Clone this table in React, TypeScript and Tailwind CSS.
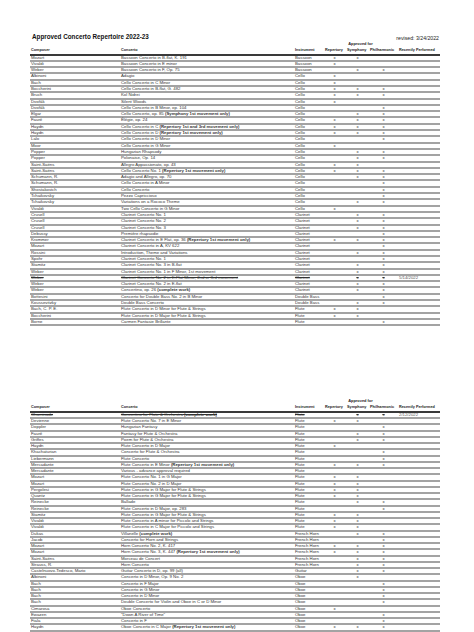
import React from "react";

type Entry = {
  c: string;
  w: string;
  b?: string;
  i: string;
  m: string;
  d?: string;
  x?: boolean;
};

const cols = "grid grid-cols-[90px_173px_30px_23px_23px_29px_42px]";

const page1: Entry[] = [
  { c: "Mozart", w: "Bassoon Concerto in B-flat, K. 191", i: "Bassoon", m: "RS" },
  { c: "Vivaldi", w: "Bassoon Concerto in E minor", i: "Bassoon", m: "R" },
  { c: "Weber", w: "Bassoon Concerto in F, Op. 75", i: "Bassoon", m: "SP" },
  { c: "Albinoni", w: "Adagio", i: "Cello", m: "R" },
  { c: "Bach", w: "Cello Concerto in C Minor", i: "Cello", m: "R" },
  { c: "Boccherini", w: "Cello Concerto in B-flat, G. 482", i: "Cello", m: "RSP" },
  { c: "Bruch", w: "Kol Nidrei", i: "Cello", m: "RSP" },
  { c: "Dvořák", w: "Silent Woods", i: "Cello", m: "R" },
  { c: "Dvořák", w: "Cello Concerto in B Minor, op. 104", i: "Cello", m: "P" },
  { c: "Elgar", w: "Cello Concerto, op. 85", b: "(Symphony 1st movement only)", i: "Cello", m: "SP" },
  { c: "Fauré", w: "Élégie, op. 24", i: "Cello", m: "RSP" },
  { c: "Haydn", w: "Cello Concerto in C", b: "(Repertory 1st and 3rd movement only)", i: "Cello", m: "RSP" },
  { c: "Haydn", w: "Cello Concerto in D", b: "(Repertory 1st movement only)", i: "Cello", m: "RSP" },
  { c: "Lalo", w: "Cello Concerto in D Minor", i: "Cello", m: "P" },
  { c: "Moor", w: "Cello Concerto in G Minor", i: "Cello", m: "R" },
  { c: "Popper", w: "Hungarian Rhapsody", i: "Cello", m: "SP" },
  { c: "Popper", w: "Polonaise, Op. 14", i: "Cello", m: "SP" },
  { c: "Saint-Saëns", w: "Allegro Appassionato, op. 43", i: "Cello", m: "RS" },
  { c: "Saint-Saëns", w: "Cello Concerto No. 1", b: "(Repertory 1st movement only)", i: "Cello", m: "RSP" },
  { c: "Schumann, R.", w: "Adagio and Allegro, op. 70", i: "Cello", m: "SP" },
  { c: "Schumann, R.", w: "Cello Concerto in A Minor", i: "Cello", m: "P" },
  { c: "Shostakovich", w: "Cello Concerto", i: "Cello", m: "P" },
  { c: "Tchaikovsky", w: "Pezzo Capriccioso", i: "Cello", m: "P" },
  { c: "Tchaikovsky", w: "Variations on a Rococo Theme", i: "Cello", m: "SP" },
  { c: "Vivaldi", w: "Two Cello Concerto in G Minor", i: "Cello", m: "R" },
  { c: "Crusell", w: "Clarinet Concerto No. 1", i: "Clarinet", m: "SP" },
  { c: "Crusell", w: "Clarinet Concerto No. 2", i: "Clarinet", m: "SP" },
  { c: "Crusell", w: "Clarinet Concerto No. 3", i: "Clarinet", m: "SP" },
  { c: "Debussy", w: "Première rhapsodie", i: "Clarinet", m: "P" },
  { c: "Krommer", w: "Clarinet Concerto in E Flat, op. 36", b: "(Repertory 1st movement only)", i: "Clarinet", m: "RSP" },
  { c: "Mozart", w: "Clarinet Concerto in A, KV 622", i: "Clarinet", m: "P" },
  { c: "Rossini", w: "Introduction, Theme and Variations", i: "Clarinet", m: "SP" },
  { c: "Spohr", w: "Clarinet Concerto No. 1", i: "Clarinet", m: "P" },
  { c: "Stamitz", w: "Clarinet Concerto No. 3 in B-flat", i: "Clarinet", m: "SP" },
  { c: "Weber", w: "Clarinet Concerto No. 1 in F Minor, 1st movement", i: "Clarinet", m: "SP" },
  { c: "Weber", w: "Clarinet Concerto No. 2 in E-Flat Minor, 2nd or 3rd movement", i: "Clarinet", m: "SP", d: "5/14/2022", x: true },
  { c: "Weber", w: "Clarinet Concerto No. 2 in E-flat", i: "Clarinet", m: "SP" },
  { c: "Weber", w: "Concertino, op. 26", b: "(complete work)", i: "Clarinet", m: "SP" },
  { c: "Bottesini", w: "Concerto for Double Bass No. 2 in B Minor", i: "Double Bass", m: "P" },
  { c: "Koussevitzky", w: "Double Bass Concerto", i: "Double Bass", m: "SP" },
  { c: "Bach, C. P. E.", w: "Flute Concerto in D Minor for Flute & Strings", i: "Flute", m: "RS" },
  { c: "Boccherini", w: "Flute Concerto in D Major for Flute & Strings", i: "Flute", m: "RS" },
  { c: "Borne", w: "Carmen Fantasie Brillante", i: "Flute", m: "P" },
];

const page2: Entry[] = [
  { c: "Chaminade", w: "Concertino for Flute & Orchestra", b: "(complete work)", i: "Flute", m: "SP", d: "2/12/2022", x: true },
  { c: "Devienne", w: "Flute Concerto No. 7 in E Minor", i: "Flute", m: "RS" },
  { c: "Doppler", w: "Hungarian Fantasy", i: "Flute", m: "P" },
  { c: "Fauré", w: "Fantasy for Flute & Orchestra", i: "Flute", m: "SP" },
  { c: "Griffes", w: "Poem for Flute & Orchestra", i: "Flute", m: "SP" },
  { c: "Haydn", w: "Flute Concerto in D Major", i: "Flute", m: "R" },
  { c: "Khachaturian", w: "Concerto for Flute & Orchestra", i: "Flute", m: "P" },
  { c: "Liebermann", w: "Flute Concerto", i: "Flute", m: "P" },
  { c: "Mercadante", w: "Flute Concerto in E Minor", b: "(Repertory 1st movement only)", i: "Flute", m: "RSP" },
  { c: "Mercadante", w: "Various - advance approval required", i: "Flute", m: "" },
  { c: "Mozart", w: "Flute Concerto No. 1 in G Major", i: "Flute", m: "RS" },
  { c: "Mozart", w: "Flute Concerto No. 2 in D Major", i: "Flute", m: "RS" },
  { c: "Pergolesi", w: "Flute Concerto in G Major for Flute & Strings", i: "Flute", m: "RS" },
  { c: "Quantz", w: "Flute Concerto in G Major for Flute & Strings", i: "Flute", m: "RS" },
  { c: "Reinecke", w: "Ballade", i: "Flute", m: "SP" },
  { c: "Reinecke", w: "Flute Concerto in D Major, op. 283", i: "Flute", m: "P" },
  { c: "Stamitz", w: "Flute Concerto in G Major for Flute & Strings", i: "Flute", m: "RS" },
  { c: "Vivaldi", w: "Flute Concerto in A minor for Piccolo and Strings", i: "Flute", m: "RS" },
  { c: "Vivaldi", w: "Flute Concerto in C Major for Piccolo and Strings", i: "Flute", m: "RS" },
  { c: "Dukas", w: "Villanelle", b: "(complete work)", i: "French Horn", m: "SP" },
  { c: "Jacob", w: "Concerto for Horn and Strings", i: "French Horn", m: "P" },
  { c: "Mozart", w: "Horn Concerto No. 2, K. 417", i: "French Horn", m: "RSP" },
  { c: "Mozart", w: "Horn Concerto No. 3, K. 447", b: "(Repertory 1st movement only)", i: "French Horn", m: "RSP" },
  { c: "Saint-Saëns", w: "Morceau de Concert", i: "French Horn", m: "SP" },
  { c: "Strauss, R.", w: "Horn Concerto", i: "French Horn", m: "SP" },
  { c: "Castelnuovo-Tedesco, Mario", w: "Guitar Concerto in D, op. 99 (all)", i: "Guitar", m: "SP" },
  { c: "Albinoni", w: "Concerto in D Minor, Op. 9 No. 2", i: "Oboe", m: "S" },
  { c: "Bach", w: "Concerto in F Major", i: "Oboe", m: "P" },
  { c: "Bach", w: "Concerto in G Minor", i: "Oboe", m: "P" },
  { c: "Bach", w: "Concerto in D Minor", i: "Oboe", m: "P" },
  { c: "Bach", w: "Double Concerto for Violin and Oboe in C or D Minor", i: "Oboe", m: "P" },
  { c: "Cimarosa", w: "Oboe Concerto", i: "Oboe", m: "R" },
  { c: "Ewazen", w: "\"Down A River of Time\"", i: "Oboe", m: "P" },
  { c: "Fiala", w: "Concerto in F", i: "Oboe", m: "P" },
  { c: "Haydn", w: "Oboe Concerto in C Major", b: "(Repertory 1st movement only)", i: "Oboe", m: "RSP" },
];

function Header() {
  return (
    <>
      <div className={cols}>
        <div className="col-start-4 col-span-3 text-center text-[3.9px] leading-[5px] font-bold text-[#222]">
          Approved for
        </div>
      </div>
      <div className={`${cols} h-[9.5px] items-end pb-[1px] border-b-2 border-[#3a3a3a] text-[3.8px] leading-[5px] font-bold text-[#222]`}>
        <div className="pl-[1px]">Composer</div>
        <div className="pl-[1px]">Concerto</div>
        <div className="pl-[2px] whitespace-nowrap">Instrument</div>
        <div className="pl-[2px]">Repertory</div>
        <div className="pl-[1px]">Symphony</div>
        <div className="pl-[1px]">Philharmonic</div>
        <div className="pl-[1px] whitespace-nowrap">Recently Performed</div>
      </div>
    </>
  );
}

function Row({ e, second }: { e: Entry; second?: boolean }) {
  const mark = (k: string) => (e.m.includes(k) ? "x" : "");
  return (
    <div
      className={`${cols} ${second ? "h-[6.25px]" : "h-[6.3px]"} border-b-2 border-[#a3a3a3] text-[4.3px] leading-[4.4px] text-[#333] ${
        e.x ? "line-through" : ""
      }`}
    >
      <div className="pl-[1px] whitespace-nowrap overflow-hidden">{e.c}</div>
      <div className="pl-[1px] whitespace-nowrap">
        {e.w}
        {e.b && <span className="font-bold"> {e.b}</span>}
      </div>
      <div className="pl-[2px] whitespace-nowrap">{e.i}</div>
      <div className="text-center">{mark("R")}</div>
      <div className="text-center">{mark("S")}</div>
      <div className="text-center">{mark("P")}</div>
      <div className="pl-[1px]">
        {e.d && <span className="inline-block text-[#555]">{e.d}</span>}
      </div>
    </div>
  );
}

export default function App() {
  return (
    <div className="w-[474px] h-[632px] overflow-hidden bg-white font-['Liberation_Sans',Arial,sans-serif] text-black">
      <div className="ml-[30px] w-[410px] pt-[33px]">
        <div className="flex items-end justify-between h-[8px]">
          <h1 className="pl-[2px] text-[6.3px] leading-[8px] font-bold text-[#111]">
            Approved Concerto Repertoire 2022-23
          </h1>
          <span className="text-[5.2px] leading-[6px] pr-[1px] text-[#222]">revised: 3/24/2022</span>
        </div>
        <Header />
        {page1.map((e, n) => (
          <Row key={n} e={e} />
        ))}
      </div>

      <div className="ml-[30px] w-[410px] mt-[72px]">
        <Header />
        {page2.map((e, n) => (
          <Row key={n} e={e} second />
        ))}
      </div>
    </div>
  );
}
